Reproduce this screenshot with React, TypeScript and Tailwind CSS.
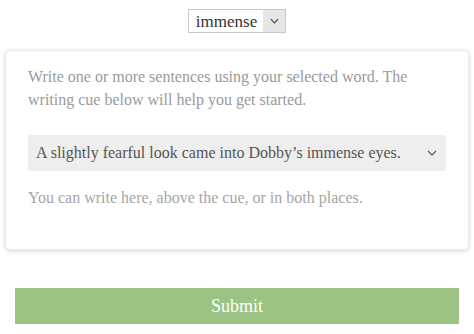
import { useState } from "react";

function Chevron({ className }: { className?: string }) {
  return (
    <svg viewBox="0 0 10 6" className={className} fill="none" stroke="currentColor" strokeWidth="1.3">
      <path d="M1 1l4 4 4-4" />
    </svg>
  );
}

export default function App() {
  const [text, setText] = useState("");

  return (
    <div className="min-h-[334px] bg-white font-['Liberation_Serif','Times_New_Roman',serif]">
      <div className="flex justify-center pt-[9px]">
        <div className="flex h-[24px] items-stretch border border-[#c8c8c8] bg-white">
          <span className="flex items-center pl-[7px] pr-[6px] text-[17px] leading-none text-[#333]">immense</span>
          <span className="flex w-[22px] items-center justify-center bg-[#e6e6e6] text-[#444]">
            <Chevron className="h-[6px] w-[9px]" />
          </span>
        </div>
      </div>

      <div className="mx-[5px] mt-[17px] h-[200px] rounded-[5px] border border-[#ececec] bg-white px-[22px] pt-[14px] shadow-[0_1px_4px_rgba(0,0,0,0.18)]">
        <p className="text-[16px] leading-[23px] text-[#9a9a9a]">
          Write one or more sentences using your selected word. The writing cue below will help you get started.
        </p>
        <div className="mt-[24px] flex h-[36px] items-center justify-between rounded-[2px] bg-[#eeeeee] pl-[8px] pr-[9px]">
          <span className="text-[16px] text-[#555]">A slightly fearful look came into Dobby’s immense eyes.</span>
          <Chevron className="h-[6px] w-[10px] text-[#666]" />
        </div>
        <textarea
          value={text}
          onChange={(e) => setText(e.target.value)}
          placeholder="You can write here, above the cue, or in both places."
          className="mt-[15px] h-[60px] w-full resize-none bg-transparent text-[16px] leading-[23px] text-[#333] outline-none placeholder:text-[#a5a5a5]"
        />
      </div>

      <div className="mx-[15px] mt-[38px]">
        <button className="h-[36px] w-full bg-[#9dc384] text-[18px] text-white">Submit</button>
      </div>
    </div>
  );
}
